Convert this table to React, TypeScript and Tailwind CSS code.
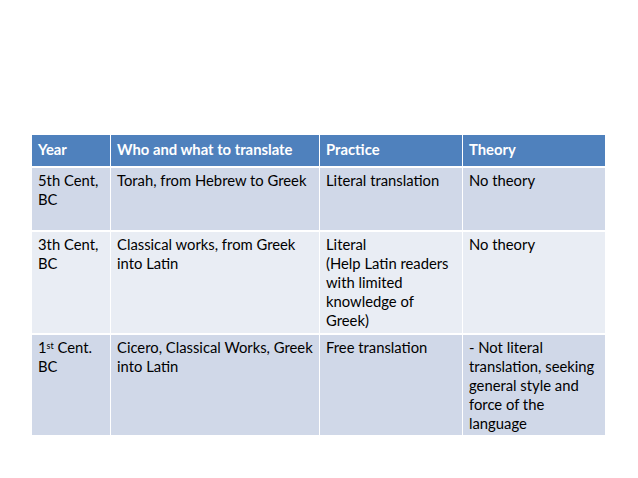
const header = ['Year', 'Who and what to translate', 'Practice', 'Theory'];

const rows = [
  {
    h: 'h-[62px]',
    bg: 'bg-[#d0d8e8]',
    cells: [
      <>5th Cent,<br />BC</>,
      'Torah, from Hebrew to Greek',
      'Literal translation',
      'No theory',
    ],
  },
  {
    h: 'h-[101px]',
    bg: 'bg-[#e9edf4]',
    cells: [
      <>3th Cent,<br />BC</>,
      <>Classical works, from Greek<br />into Latin</>,
      <>Literal<br />(Help Latin readers<br />with limited<br />knowledge of<br />Greek)</>,
      'No theory',
    ],
  },
  {
    h: 'h-[100px]',
    bg: 'bg-[#d0d8e8]',
    cells: [
      <>1<sup className="text-[9px]">st</sup> Cent.<br />BC</>,
      <>Cicero, Classical Works, Greek<br />into Latin</>,
      'Free translation',
      <>- Not literal<br />translation, seeking<br />general style and<br />force of the<br />language</>,
    ],
  },
];

export default function App() {
  return (
    <div className="w-[638px] h-[478px] bg-white pt-[135px] pl-[32px]" style={{ fontFamily: 'Lato, "Open Sans", sans-serif' }}>
      <div className="grid grid-cols-[78px_208px_142px_142px] gap-x-px gap-y-[2px] w-[573px] text-[14.8px] leading-[19px] text-black">
        {header.map((h) => (
          <div key={h} className="h-[31px] bg-[#4f81bd] text-white font-bold flex items-center px-[6px] pb-[3px]">
            {h}
          </div>
        ))}
        {rows.map((r, i) =>
          r.cells.map((c, j) => (
            <div key={`${i}-${j}`} className={`${r.h} ${r.bg} px-[6px] pt-[3px]`}>
              {c}
            </div>
          ))
        )}
      </div>
    </div>
  );
}
